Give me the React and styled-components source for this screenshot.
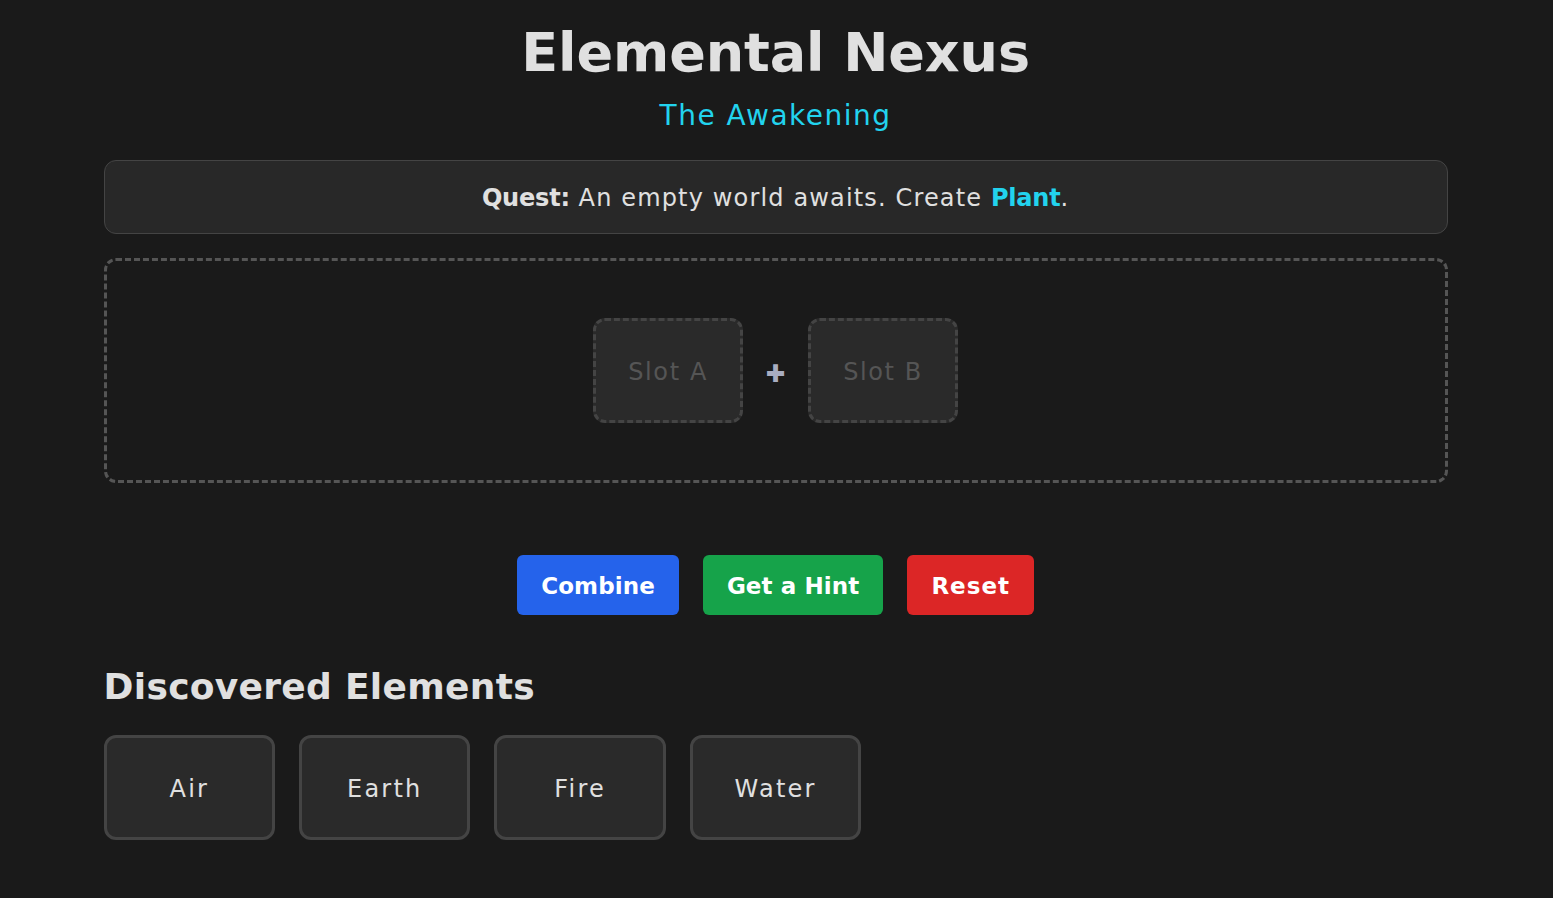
import React from 'react';
import styled, { createGlobalStyle } from 'styled-components';

const GlobalStyle = createGlobalStyle`
  html, body {
    margin: 0;
    padding: 0;
    background: #1a1a1a;
  }
  body {
    color: #e0e0e0;
    font-family: 'DejaVu Sans', 'Liberation Sans', sans-serif;
  }
  * {
    box-sizing: border-box;
  }
`;

const elements = ['Air', 'Earth', 'Fire', 'Water'];

const App = () => {
  return (
    <>
      <GlobalStyle />
      <Page>
        <Header>
          <Title>Elemental Nexus</Title>
          <Subtitle>The Awakening</Subtitle>
        </Header>

        <QuestBox>
          <strong>Quest:</strong> An empty world awaits. Create <Target>Plant</Target>.
        </QuestBox>

        <CraftArea>
          <Slot>Slot A</Slot>
          <Plus>+</Plus>
          <Slot>Slot B</Slot>
        </CraftArea>

        <Actions>
          <ActionButton $color="#2563eb" $tracking="0.1px">Combine</ActionButton>
          <ActionButton $color="#16a34a" $tracking="0.1px">Get a Hint</ActionButton>
          <ActionButton $color="#dc2626" $tracking="1px">Reset</ActionButton>
        </Actions>

        <SectionTitle>Discovered Elements</SectionTitle>
        <ElementGrid>
          {elements.map((name) => (
            <ElementCard key={name}>{name}</ElementCard>
          ))}
        </ElementGrid>
      </Page>
    </>
  );
};

const Page = styled.div`
  width: 1344px;
  margin-left: 103.6px;
  padding-top: 20px;
`;

const Header = styled.header`
  text-align: center;
  margin-bottom: 26px;
`;

const Title = styled.h1`
  margin: 0;
  height: 66px;
  font-size: 54px;
  line-height: 66px;
  font-weight: 700;
  letter-spacing: -0.1px;
  color: #e0e0e0;
`;

const Subtitle = styled.p`
  margin: 11px 0 0;
  height: 37px;
  font-size: 28px;
  line-height: 37px;
  letter-spacing: 1.5px;
  color: #22d3ee;
`;

const QuestBox = styled.div`
  height: 74px;
  padding-top: 2px;
  display: flex;
  align-items: center;
  justify-content: center;
  white-space: pre-wrap;
  background: #282828;
  border: 1px solid #444;
  border-radius: 12px;
  font-size: 24px;
  letter-spacing: 1.15px;

  strong {
    font-weight: 700;
    letter-spacing: -0.2px;
  }
`;

const Target = styled.strong`
  color: #22d3ee;
`;

const CraftArea = styled.div`
  height: 225px;
  margin-top: 24px;
  display: flex;
  align-items: center;
  justify-content: center;
  gap: 24px;
  border: 3px dashed #555;
  border-radius: 12px;
`;

const Slot = styled.div`
  width: 150px;
  height: 105px;
  padding-top: 2px;
  display: flex;
  align-items: center;
  justify-content: center;
  background: #2a2a2a;
  border: 3px dashed #444;
  border-radius: 12px;
  color: #555;
  font-size: 24px;
  letter-spacing: 1.6px;
`;

const Plus = styled.span`
  width: 17px;
  padding-top: 4px;
  display: flex;
  justify-content: center;
  font-size: 24px;
  font-weight: 700;
  -webkit-text-stroke: 2px #a9adc1;
  color: #a9adc1;
`;

const Actions = styled.div`
  margin-top: 72px;
  display: flex;
  justify-content: center;
  gap: 24px;
`;

const ActionButton = styled.button`
  height: 60px;
  padding: 2px 24px 0;
  border: none;
  border-radius: 6px;
  background: ${(props) => props.$color};
  color: #fff;
  font-family: inherit;
  font-size: 23px;
  font-weight: 700;
  letter-spacing: ${(props) => props.$tracking};
`;

const SectionTitle = styled.h2`
  margin: 48px 0 0;
  height: 48px;
  font-size: 36px;
  line-height: 48px;
  font-weight: 700;
  letter-spacing: 0.3px;
  color: #e0e0e0;
`;

const ElementGrid = styled.div`
  margin-top: 24px;
  display: grid;
  grid-template-columns: repeat(auto-fill, minmax(150px, 1fr));
  gap: 24px;
`;

const ElementCard = styled.div`
  height: 105px;
  padding-top: 2px;
  display: flex;
  align-items: center;
  justify-content: center;
  background: #2a2a2a;
  border: 3px solid #444;
  border-radius: 12px;
  font-size: 24px;
  letter-spacing: 2.2px;
`;

export default App;
